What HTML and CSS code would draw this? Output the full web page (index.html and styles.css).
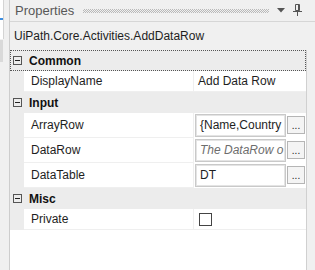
FILE: index.html
```html
<!DOCTYPE html>
<html lang="en">
<head>
    <meta charset="UTF-8">
    <title>Properties</title>
    <link rel="stylesheet" href="styles.css">
</head>
<body>
    <div class="window">
        <!-- Neighbouring dock panel edge -->
        <div class="dock-edge">
            <div class="neighbor">
                <div class="neighbor-tab"></div>
            </div>
            <div class="neighbor-scroll"></div>
        </div>

        <div class="props">
            <div class="props-title">
                <span class="props-caption">Properties</span>
                <span class="grip"></span>
                <svg class="title-icon" width="8" height="5" viewBox="0 0 8 5">
                    <polygon points="0,0 8,0 4,4.5" fill="#555"/>
                </svg>
                <svg class="title-icon pin" width="9" height="12" viewBox="0 0 9 12">
                    <path d="M2.5 0.5h4v6h-4z" fill="none" stroke="#555"/>
                    <path d="M5 1h1.5v5.5H5z" fill="#555"/>
                    <path d="M0 7.5h9M4.5 8v4" stroke="#555"/>
                </svg>
            </div>

            <div class="props-type">UiPath.Core.Activities.AddDataRow</div>

            <div class="grid">
                <div class="cat focused"><span class="toggle"></span>Common</div>
                <div class="prop">
                    <div class="name">DisplayName</div>
                    <div class="value">Add Data Row</div>
                </div>

                <div class="cat"><span class="toggle"></span>Input</div>
                <div class="prop tall">
                    <div class="name">ArrayRow</div>
                    <div class="value editor">
                        <div class="textbox">{Name,Country</div>
                        <div class="dots">...</div>
                    </div>
                </div>
                <div class="prop tall">
                    <div class="name">DataRow</div>
                    <div class="value editor">
                        <div class="textbox hint">The DataRow o</div>
                        <div class="dots">...</div>
                    </div>
                </div>
                <div class="prop tall">
                    <div class="name">DataTable</div>
                    <div class="value editor">
                        <div class="textbox">DT</div>
                        <div class="dots">...</div>
                    </div>
                </div>

                <div class="cat"><span class="toggle"></span>Misc</div>
                <div class="prop">
                    <div class="name">Private</div>
                    <div class="value"><span class="checkbox"></span></div>
                </div>
            </div>
        </div>
    </div>
</body>
</html>
```

FILE: styles.css
```css
* {
    margin: 0;
    padding: 0;
    box-sizing: border-box;
}

body {
    font-family: 'Segoe UI', 'Liberation Sans', Arial, sans-serif;
    font-size: 12px;
    color: #1e1e1e;
    background: #f0f0f0;
    overflow: hidden;
}

.window {
    display: flex;
    width: 315px;
    height: 270px;
}

/* Left dock edge */
.dock-edge {
    width: 10px;
    flex-shrink: 0;
    border-right: 1px solid #cdcdcd;
    display: flex;
    flex-direction: column;
}

.neighbor {
    width: 4px;
    height: 39px;
    background: #fff;
    border-right: 1px solid #d4d4d4;
    padding-top: 18px;
}

.neighbor-tab {
    width: 3px;
    height: 2px;
    background: #3d8ee0;
}

.neighbor-scroll {
    width: 3px;
    height: 22px;
    margin-top: 1px;
    background: #d9d9d9;
}

/* Properties panel */
.props {
    flex: 1;
    min-width: 0;
    display: flex;
    flex-direction: column;
}

.props-title {
    height: 22px;
    display: flex;
    align-items: center;
    padding: 0 13px 0 5px;
    border-bottom: 1px solid #d6d6d6;
}

.props-caption {
    font-size: 13px;
    color: #585858;
}

.grip {
    flex: 1;
    height: 4px;
    margin: 0 8px 0 9px;
    background: repeating-conic-gradient(#b9b9b9 0 25%, transparent 0 50%) 0 0 / 2px 2px;
}

.title-icon {
    display: block;
}

.pin {
    margin-left: 8px;
    margin-top: -2px;
}

.props-type {
    height: 28px;
    display: flex;
    align-items: center;
    padding-left: 4px;
    color: #1e1e1e;
}

/* Property grid */
.grid {
    flex: 1;
    background: #fff;
    margin-right: 8px;
    border-right: 1px solid #d0d0d0;
}

.cat {
    height: 21px;
    display: flex;
    align-items: center;
    background: #ececec;
    font-weight: bold;
    color: #111;
}

.cat.focused {
    border: 1px dotted #555;
}

.toggle {
    position: relative;
    width: 9px;
    height: 9px;
    margin: 0 7px 0 3px;
    border: 1px solid #555;
}

.cat.focused .toggle {
    margin-left: 2px;
}

.toggle::after {
    content: '';
    position: absolute;
    left: 1px;
    top: 3px;
    width: 5px;
    height: 1px;
    background: #222;
}

.prop {
    display: flex;
    height: 21px;
    background: #ececec;
    padding-left: 14px;
}

.prop.tall {
    height: 25px;
}

.name {
    flex: 0 0 169px;
    display: flex;
    align-items: center;
    padding-left: 7px;
    background: #fff;
    border-bottom: 1px solid #efefef;
}

.value {
    flex: 1;
    min-width: 0;
    display: flex;
    align-items: center;
    padding-left: 4px;
    background: #fff;
    border-left: 1px solid #efefef;
    border-bottom: 1px solid #efefef;
}

.value.editor {
    padding: 0 1px 1px 1px;
    gap: 1px;
    border-bottom: none;
}

.textbox {
    flex: 1;
    min-width: 0;
    height: 23px;
    display: flex;
    align-items: center;
    padding-left: 4px;
    overflow: hidden;
    white-space: nowrap;
    border: 1px solid #c9c9c9;
    box-shadow: inset 0 0 0 1px #e4e4e4;
}

.textbox.hint {
    font-style: italic;
    color: #6d6d6d;
}

.dots {
    flex: 0 0 18px;
    height: 18px;
    border: 1px solid #b5b5b5;
    background: #f4f4f4;
    font-size: 10px;
    line-height: 17px;
    text-align: center;
    color: #222;
}

.checkbox {
    width: 13px;
    height: 13px;
    margin-left: 1px;
    border: 1px solid #444;
    background: #fff;
}
```
